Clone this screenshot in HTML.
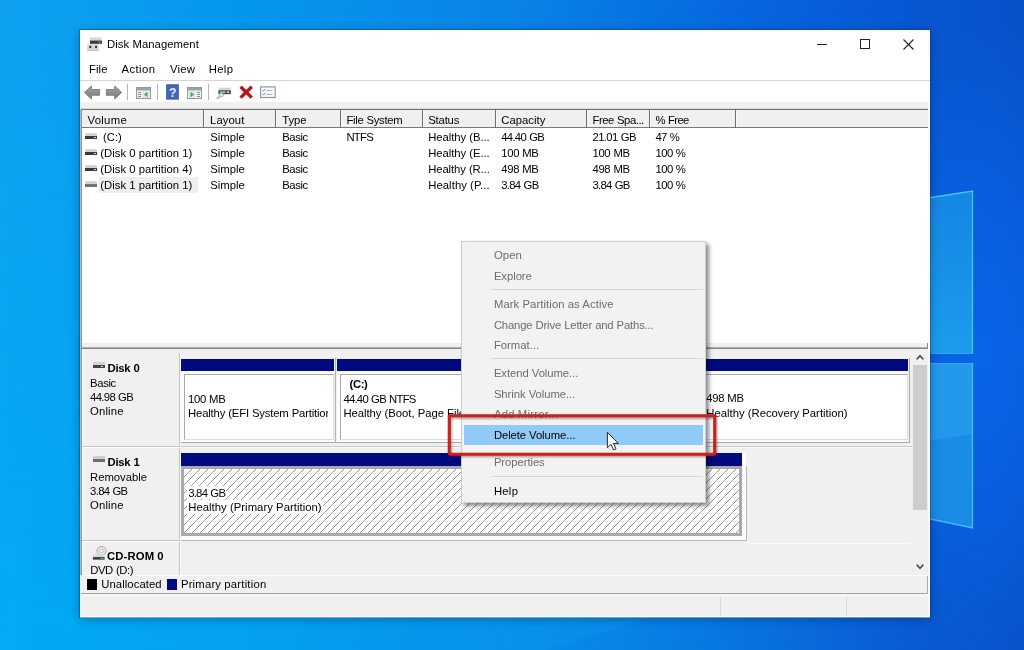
<!DOCTYPE html>
<html lang="en">
<head>
<meta charset="utf-8">
<title>Disk Management</title>
<style>
html,body{margin:0;padding:0;}
body{width:1024px;height:650px;overflow:hidden;position:relative;background:#0a6fd6;
  font-family:'Liberation Sans',sans-serif;font-size:12px;color:#000;}
.a{position:absolute;}
.t{position:absolute;white-space:pre;line-height:1;font-size:11.3px;}
.clip{position:absolute;overflow:hidden;}
</style>
</head>
<body>
<!-- desktop wallpaper -->
<div class="a" style="left:0;top:0;width:1024px;height:650px;
 background:linear-gradient(90deg,#10a2f0 0px,#0697ee 250px,#0a84e8 512px,#0873e3 640px,#0764de 768px,#0858d4 900px,#0a50ca 1024px);"></div>
<div class="a" style="left:0;top:0;width:1024px;height:650px;
 background:linear-gradient(90deg,#02abf3 0px,#04a1f0 256px,#0690ea 512px,#0782e6 640px,#0870de 768px,#095cd4 900px,#0a50c8 1024px);
 -webkit-mask-image:linear-gradient(180deg,rgba(0,0,0,0) 0px,rgba(0,0,0,1) 650px);mask-image:linear-gradient(180deg,rgba(0,0,0,0) 0px,rgba(0,0,0,1) 650px);"></div>
<svg class="a" style="left:0;top:0" width="1024" height="650" viewBox="0 0 1024 650">
  <defs>
    <linearGradient id="pane1" x1="0" y1="0" x2="0" y2="1">
      <stop offset="0" stop-color="#1486e4"/><stop offset="1" stop-color="#1c9cec"/>
    </linearGradient>
    <radialGradient id="glow" cx="0.5" cy="0.5" r="0.5">
      <stop offset="0" stop-color="#0768ea" stop-opacity=".9"/><stop offset=".55" stop-color="#0764e6" stop-opacity=".6"/><stop offset="1" stop-color="#0760e0" stop-opacity="0"/>
    </radialGradient>
    <linearGradient id="ray" x1="0" y1="0" x2="1" y2="0">
      <stop offset="0" stop-color="#0c9cf0" stop-opacity="0"/><stop offset="1" stop-color="#0c9cf0" stop-opacity=".4"/>
    </linearGradient>
  </defs>
  <polygon points="300,600 705,600 545,650 300,650" fill="url(#ray)"/>
  <ellipse cx="985" cy="350" rx="150" ry="330" fill="url(#glow)"/>
  <polygon points="928,198 972.5,191 972.5,354 928,354" fill="url(#pane1)"/>
  <polygon points="928,363 972.5,363 972.5,528 928,518.5" fill="#1a8ce6"/>
  <polygon points="928,363 972.5,363 972.5,434 928,441" fill="#2399ec"/>
  <polyline points="928,198 972.5,191 972.5,354" fill="none" stroke="#43c6f6" stroke-width="1.3"/>
  <polyline points="972.5,363 972.5,528 928,518.5" fill="none" stroke="#3fc0f5" stroke-width="1.3"/>
  <line x1="928" y1="363.5" x2="972.5" y2="363.5" stroke="#35a9f0" stroke-width="1"/>
  <line x1="928" y1="353.5" x2="972.5" y2="353.5" stroke="#2fa6ee" stroke-width="1"/>
</svg>
<!-- window frame -->
<div class="a" style="left:80px;top:30px;width:850px;height:587px;background:#fff;box-shadow:0 0 0 1px rgba(10,60,120,.4),0 2px 10px rgba(0,0,0,.3);"></div>
<!-- title icon -->
<svg class="a" style="left:86px;top:36px" width="18" height="16" viewBox="86 36 18 16">
  <rect x="90" y="37.4" width="11.6" height="3.1" fill="#d6dad6"/>
  <rect x="90" y="40.5" width="12" height="3.3" fill="#3b3b3b"/>
  <rect x="98.6" y="41.4" width="2.2" height="1.2" fill="#8d8d8d"/>
  <rect x="87.1" y="44" width="11.6" height="6.8" fill="#d8d8d8"/>
  <rect x="87.1" y="50" width="11.6" height="0.8" fill="#b4b4b4"/>
  <rect x="89.3" y="45.8" width="1.9" height="2.3" fill="#2e2e2e"/>
  <rect x="95.1" y="45.8" width="1.9" height="2.3" fill="#2e2e2e"/>
</svg>
<!-- caption buttons -->
<div class="a" style="left:817px;top:44px;width:10px;height:1px;background:#222;"></div>
<div class="a" style="left:860px;top:39px;width:8px;height:8px;border:1px solid #222;"></div>
<svg class="a" style="left:903px;top:38.5px" width="11" height="11" viewBox="0 0 11 11"><path d="M0.5 0.5 L10.5 10.5 M10.5 0.5 L0.5 10.5" stroke="#222" stroke-width="1.1" fill="none"/></svg>
<!-- menu/toolbar separators -->
<div class="a" style="left:80px;top:80px;width:850px;height:1px;background:#d4d4d4;"></div>
<div class="a" style="left:80px;top:102px;width:850px;height:515px;background:#f0f0f0;"></div>
<div class="a" style="left:80px;top:617px;width:850px;height:1px;background:rgba(244,250,255,.45);"></div>
<!-- toolbar icons -->
<svg class="a" style="left:80px;top:81px" width="220" height="21" viewBox="80 81 220 21">
  <defs><linearGradient id="arr" x1="0" y1="0" x2="0" y2="1"><stop offset="0" stop-color="#a9a9a9"/><stop offset=".5" stop-color="#8e8e8e"/><stop offset="1" stop-color="#7c7c7c"/></linearGradient></defs>
  <path d="M84.4 92.4 L91.4 86 V89.5 H99.6 V95.3 H91.4 V98.9 Z" fill="url(#arr)" stroke="#6f6f6f" stroke-width=".8" stroke-linejoin="round"/>
  <path d="M121.7 92.4 L114.7 86 V89.5 H106.4 V95.3 H114.7 V98.9 Z" fill="url(#arr)" stroke="#6f6f6f" stroke-width=".8" stroke-linejoin="round"/>
  <rect x="127" y="84" width="1" height="16" fill="#b4b4b4"/>
  <rect x="157" y="84" width="1" height="16" fill="#b4b4b4"/>
  <rect x="208" y="84" width="1" height="16" fill="#b4b4b4"/>
  <!-- show/hide console tree -->
  <rect x="136.5" y="87.5" width="14" height="11" fill="#f4f4f4" stroke="#8f9aa6"/>
  <rect x="137" y="88" width="13" height="2.5" fill="#9aa3ad"/>
  <rect x="138" y="92" width="3" height="1" fill="#8a8a8a"/><rect x="138" y="94" width="3" height="1" fill="#8a8a8a"/><rect x="138" y="96" width="3" height="1" fill="#8a8a8a"/>
  <rect x="142.5" y="91" width="7" height="7" fill="#dfe9df"/>
  <path d="M147.5 91.8 V97.2 L143.8 94.5 Z" fill="#52a352"/>
  <!-- help -->
  <rect x="166.2" y="84.3" width="12.6" height="15.3" fill="#30509f"/>
  <rect x="167.2" y="85.3" width="10.6" height="13.3" fill="#4366bb"/>
  <text x="172.6" y="96.6" font-family="'Liberation Sans',sans-serif" font-size="12" font-weight="700" fill="#eef2ff" text-anchor="middle">?</text>
  <!-- action pane -->
  <rect x="187.5" y="87.5" width="14" height="11" fill="#f4f4f4" stroke="#8f9aa6"/>
  <rect x="188" y="88" width="13" height="2.5" fill="#9aa3ad"/>
  <rect x="197" y="92" width="3" height="1" fill="#8a8a8a"/><rect x="197" y="94" width="3" height="1" fill="#8a8a8a"/><rect x="197" y="96" width="3" height="1" fill="#8a8a8a"/>
  <rect x="188.5" y="91" width="7" height="7" fill="#dfe9df"/>
  <path d="M190.5 91.8 V97.2 L194.2 94.5 Z" fill="#52a352"/>
  <!-- disk + magnifier -->
  <rect x="218.6" y="87.7" width="12" height="2.6" fill="#d3d7db"/>
  <rect x="218.4" y="90.2" width="12.4" height="4" fill="#444a50"/>
  <rect x="220" y="91.4" width="5.5" height="1.5" fill="#a8d4b4"/>
  <rect x="227" y="91.4" width="2" height="1.5" fill="#dfe8f0"/>
  <circle cx="221.2" cy="95" r="2" fill="#dcecf6" stroke="#93a7b8" stroke-width=".9"/>
  <path d="M219.8 96.5 L216.8 98.9" stroke="#93a7b8" stroke-width="1.5"/>
  <!-- red X -->
  <path d="M240.6 86.8 L251.8 97.6 M251.8 86.8 L240.6 97.6" stroke="#b8121a" stroke-width="3.3" fill="none"/>
  <!-- checklist -->
  <rect x="260.6" y="86.9" width="14.6" height="10.6" fill="#fbfbfb" stroke="#8e98a2" stroke-width="1.2"/>
  <path d="M262.6 90 l1 1.1 l1.8 -2.2 M262.6 94 l1 1.1 l1.8 -2.2" stroke="#5f8fcf" stroke-width="1" fill="none"/>
  <rect x="266.5" y="90" width="6" height="1" fill="#a9b2bb"/><rect x="266.5" y="94" width="6" height="1" fill="#a9b2bb"/>
</svg>
<!-- volume list -->
<div class="a" style="left:80px;top:109px;width:848px;height:234px;background:#fff;"></div>
<div class="a" style="left:82px;top:110px;width:846px;height:17px;background:#f0f0f0;"></div>
<div class="a" style="left:80px;top:109px;width:848px;height:1px;background:#6e6e6e;"></div>
<div class="a" style="left:80px;top:108px;width:848px;height:1px;background:#dcdcdc;"></div>
<div class="a" style="left:80px;top:109px;width:1px;height:466px;background:#b4bcc3;"></div>
<div class="a" style="left:81px;top:109px;width:1px;height:466px;background:#8c9399;"></div>
<div class="a" style="left:82px;top:127px;width:846px;height:1px;background:#787878;"></div>
<div class="a" style="left:203px;top:110px;width:1px;height:18px;background:#6e6e6e;"></div>
<div class="a" style="left:204px;top:110px;width:1px;height:17px;background:#fafafa;"></div>
<div class="a" style="left:275px;top:110px;width:1px;height:18px;background:#6e6e6e;"></div>
<div class="a" style="left:276px;top:110px;width:1px;height:17px;background:#fafafa;"></div>
<div class="a" style="left:340px;top:110px;width:1px;height:18px;background:#6e6e6e;"></div>
<div class="a" style="left:341px;top:110px;width:1px;height:17px;background:#fafafa;"></div>
<div class="a" style="left:422px;top:110px;width:1px;height:18px;background:#6e6e6e;"></div>
<div class="a" style="left:423px;top:110px;width:1px;height:17px;background:#fafafa;"></div>
<div class="a" style="left:495px;top:110px;width:1px;height:18px;background:#6e6e6e;"></div>
<div class="a" style="left:496px;top:110px;width:1px;height:17px;background:#fafafa;"></div>
<div class="a" style="left:586px;top:110px;width:1px;height:18px;background:#6e6e6e;"></div>
<div class="a" style="left:587px;top:110px;width:1px;height:17px;background:#fafafa;"></div>
<div class="a" style="left:649px;top:110px;width:1px;height:18px;background:#6e6e6e;"></div>
<div class="a" style="left:650px;top:110px;width:1px;height:17px;background:#fafafa;"></div>
<div class="a" style="left:735px;top:110px;width:1px;height:18px;background:#6e6e6e;"></div>
<div class="a" style="left:736px;top:110px;width:1px;height:17px;background:#fafafa;"></div>
<div class="a" style="left:99px;top:177px;width:99px;height:16px;background:#eeeeee;"></div>
<div class="a" style="left:85px;top:133px;width:12px;height:3px;background:#d2d5d2;border-radius:1px 1px 0 0;"></div>
<div class="a" style="left:85px;top:136px;width:12px;height:3px;background:#3a3a3a;"></div>
<div class="a" style="left:94px;top:137px;width:2px;height:1px;background:#cfe3cf;"></div>
<div class="a" style="left:85px;top:149px;width:12px;height:3px;background:#d2d5d2;border-radius:1px 1px 0 0;"></div>
<div class="a" style="left:85px;top:152px;width:12px;height:3px;background:#3a3a3a;"></div>
<div class="a" style="left:94px;top:153px;width:2px;height:1px;background:#cfe3cf;"></div>
<div class="a" style="left:85px;top:165px;width:12px;height:3px;background:#d2d5d2;border-radius:1px 1px 0 0;"></div>
<div class="a" style="left:85px;top:168px;width:12px;height:3px;background:#3a3a3a;"></div>
<div class="a" style="left:94px;top:169px;width:2px;height:1px;background:#cfe3cf;"></div>
<div class="a" style="left:85px;top:181px;width:12px;height:3px;background:#d2d5d2;border-radius:1px 1px 0 0;"></div>
<div class="a" style="left:85px;top:184px;width:12px;height:3px;background:#727272;"></div>
<!-- graphical view -->
<div class="a" style="left:82px;top:347px;width:846px;height:1px;background:#b0b0b0;"></div>
<div class="a" style="left:82px;top:348px;width:846px;height:1px;background:#868686;"></div>
<div class="a" style="left:82px;top:349px;width:1px;height:226px;background:#fafafa;"></div>
<!-- disk label panels -->
<div class="a" style="left:82px;top:353px;width:97px;height:93px;border-right:1px solid #c2c2c2;border-bottom:1px solid #c6c6c6;box-shadow:1px 1px 0 #fdfdfd;"></div>
<div class="a" style="left:82px;top:448px;width:97px;height:92px;border-right:1px solid #c2c2c2;border-bottom:1px solid #c6c6c6;box-shadow:1px 1px 0 #fdfdfd;"></div>
<div class="a" style="left:82px;top:542px;width:97px;height:33px;border-right:1px solid #c2c2c2;box-shadow:1px 0 0 #fdfdfd;"></div>
<!-- disk icons -->
<div class="a" style="left:93px;top:362px;width:12px;height:3px;background:#d2d5d2;"></div>
<div class="a" style="left:93px;top:365px;width:12px;height:3px;background:#474747;"></div>
<div class="a" style="left:101px;top:366px;width:2px;height:1px;background:#cfe3cf;"></div>
<div class="a" style="left:93px;top:456px;width:12px;height:3px;background:#cfcfcf;"></div>
<div class="a" style="left:93px;top:459px;width:12px;height:3px;background:#6e6e6e;"></div>
<!-- cd-rom icon -->
<svg class="a" style="left:91px;top:546px" width="16" height="16" viewBox="0 0 16 16">
  <circle cx="10.5" cy="5" r="4.6" fill="#e6e6e6" stroke="#a6a6a6" stroke-width=".9"/>
  <circle cx="10.5" cy="5" r="1.7" fill="#fdfdfd" stroke="#b0b0b0" stroke-width=".8"/>
  <rect x="1.9" y="8.5" width="11.7" height="2.5" fill="#d5d9d5"/>
  <rect x="1.9" y="11" width="11.7" height="2.7" fill="#3d4a41"/>
  <rect x="10" y="11.8" width="2.6" height="1" fill="#6fc77a"/>
</svg>
<!-- Disk 0 row frame lines -->
<div class="a" style="left:181px;top:442px;width:729px;height:1px;background:#acacac;"></div>
<div class="a" style="left:181px;top:446px;width:731px;height:1px;background:#c8c8c8;"></div>
<div class="a" style="left:181px;top:447px;width:731px;height:1px;background:#f8f8f8;"></div>
<!-- Disk 0: partition 1 -->
<div class="a" style="left:181px;top:359px;width:153px;height:12px;background:#000a80;"></div>
<div class="a" style="left:181px;top:371px;width:153px;height:71px;background:#fcfcfc;"></div>
<div class="a" style="left:184px;top:374px;width:148px;height:64px;background:#fff;border:1px solid #a9a9a9;border-right-color:#dedede;border-bottom-color:#dedede;"></div>
<div class="a" style="left:335px;top:358px;width:1px;height:84px;background:#b2b2b2;"></div>
<!-- Disk 0: partition 2 (C:) -->
<div class="a" style="left:337px;top:359px;width:360px;height:12px;background:#000a80;"></div>
<div class="a" style="left:337px;top:371px;width:360px;height:71px;background:#fcfcfc;"></div>
<div class="a" style="left:340px;top:374px;width:354px;height:64px;background:#fff;border:1px solid #a9a9a9;border-right-color:#dedede;border-bottom-color:#dedede;"></div>
<div class="a" style="left:698px;top:358px;width:1px;height:84px;background:#b2b2b2;"></div>
<!-- Disk 0: partition 3 (recovery) -->
<div class="a" style="left:700px;top:359px;width:208px;height:12px;background:#000a80;"></div>
<div class="a" style="left:700px;top:371px;width:208px;height:71px;background:#fcfcfc;"></div>
<div class="a" style="left:703px;top:374px;width:203px;height:64px;background:#fff;border:1px solid #a9a9a9;border-right-color:#dedede;border-bottom-color:#dedede;"></div>
<div class="a" style="left:909px;top:358px;width:1px;height:85px;background:#ababab;"></div>
<!-- Disk 1: removable, selected (hatched) -->
<div class="a" style="left:181px;top:466px;width:565px;height:74px;background:#fbfbfb;border-right:1px solid #b6b6b6;border-bottom:1px solid #b6b6b6;"></div>
<div class="a" style="left:181px;top:453px;width:561px;height:13px;background:#000a80;"></div>
<div class="a" style="left:181px;top:466px;width:555px;height:64px;border:3px solid #a9a9a9;
  background:#fff repeating-linear-gradient(135deg,rgba(0,0,0,0) 0px,rgba(0,0,0,0) 5.05px,#989898 5.05px,#989898 5.657px);"></div>
<div class="a" style="left:187px;top:486px;width:39px;height:13px;background:#fff;"></div>
<div class="a" style="left:187px;top:500px;width:136px;height:14px;background:#fff;"></div>
<div class="a" style="left:742px;top:453px;width:4px;height:13px;background:#fbfbfb;"></div>
<div class="a" style="left:747px;top:543px;width:163px;height:1px;background:#fafafa;"></div>
<!-- scrollbar -->
<div class="a" style="left:912px;top:349px;width:16px;height:226px;background:#f0f0f0;"></div>
<div class="a" style="left:913px;top:365px;width:14px;height:145px;background:#cdcdcd;"></div>
<svg class="a" style="left:912px;top:349px" width="16" height="226" viewBox="0 0 16 226">
  <path d="M4.7 10.4 L8 6.8 L11.3 10.4" fill="none" stroke="#505050" stroke-width="1.6"/>
  <path d="M4.7 215.6 L8 219.2 L11.3 215.6" fill="none" stroke="#505050" stroke-width="1.6"/>
</svg>
<!-- legend -->
<div class="a" style="left:82px;top:575px;width:846px;height:18px;background:#f0f0f0;"></div>
<div class="a" style="left:82px;top:575px;width:846px;height:1px;background:#fafafa;"></div>
<div class="a" style="left:87px;top:579px;width:10px;height:11px;background:#000;"></div>
<div class="a" style="left:167px;top:579px;width:10px;height:11px;background:#000a80;"></div>
<!-- status bar -->
<div class="a" style="left:81px;top:593px;width:847px;height:1px;background:#a8a8a8;"></div>
<div class="a" style="left:720px;top:597px;width:1px;height:19px;background:#dadada;"></div>
<div class="a" style="left:846px;top:597px;width:1px;height:19px;background:#dadada;"></div>
<div class="a" style="left:928px;top:102px;width:2px;height:515px;background:#fbfbfb;"></div>
<div class="a" style="left:927px;top:576px;width:1px;height:18px;background:#a8a8a8;"></div>
<div class="a" style="left:82px;top:595px;width:846px;height:1px;background:#fafafa;"></div>
<div class="a" style="left:80px;top:616px;width:850px;height:1px;background:#fafafa;"></div>
<div class="a" style="left:927px;top:343px;width:1px;height:5px;background:#8a8a8a;"></div>
<!-- context menu -->
<div class="a" style="left:461px;top:241px;width:243px;height:260px;background:#f2f2f2;border:1px solid #cfcfcf;box-shadow:3px 3px 4px rgba(0,0,0,.45);z-index:20;"></div>
<div class="a" style="left:491px;top:289px;width:212px;height:1px;background:#d7d7d7;z-index:21;"></div>
<div class="a" style="left:491px;top:358px;width:212px;height:1px;background:#d7d7d7;z-index:21;"></div>
<div class="a" style="left:491px;top:476px;width:212px;height:1px;background:#d7d7d7;z-index:21;"></div>
<div class="a" style="left:464px;top:425px;width:239px;height:20px;background:#91c9f7;z-index:21;"></div>
<!-- red annotation box -->
<svg class="a" style="left:440px;top:408px;z-index:40" width="290" height="60" viewBox="440 408 290 60">
  <defs><filter id="rs" x="-5%" y="-20%" width="110%" height="150%"><feGaussianBlur stdDeviation="1.3"/></filter></defs>
  <rect x="450.3" y="417.2" width="265.4" height="38.4" rx="0.6" fill="none" stroke="#5a1010" stroke-opacity=".45" stroke-width="3" filter="url(#rs)"/>
  <rect x="449.3" y="415.7" width="265.4" height="38.5" rx="0.6" fill="none" stroke="#c9211f" stroke-width="3.1"/>
</svg>
<!-- mouse cursor -->
<svg class="a" style="left:606px;top:431px;z-index:50" width="16" height="22" viewBox="0 0 16 22">
  <path d="M1.4 1.3 V16.8 L5 13.4 L7.6 18.9 L10 17.8 L7.5 12.4 H12.3 Z" fill="#fff" stroke="#18222c" stroke-width=".95" stroke-linejoin="round"/>
</svg>

<!-- text -->
<div class="a" style="left:0;top:0;width:1024px;height:650px;will-change:transform;">
<span class="t" style="left:107.1px;top:38.93px;letter-spacing:0.054px;word-spacing:-0.054px;">Disk Management</span>
<span class="t" style="left:89.0px;top:64.23px;letter-spacing:0.074px;">File</span>
<span class="t" style="left:121.5px;top:64.23px;letter-spacing:0.432px;">Action</span>
<span class="t" style="left:170.1px;top:64.23px;letter-spacing:0.176px;">View</span>
<span class="t" style="left:208.8px;top:64.23px;letter-spacing:0.316px;">Help</span>
<span class="t" style="left:87.5px;top:114.83px;letter-spacing:0.302px;">Volume</span>
<span class="t" style="left:210.1px;top:114.83px;letter-spacing:0.063px;">Layout</span>
<span class="t" style="left:282.2px;top:114.83px;letter-spacing:-0.025px;">Type</span>
<span class="t" style="left:346.4px;top:114.83px;letter-spacing:-0.302px;word-spacing:0.302px;">File System</span>
<span class="t" style="left:428.2px;top:114.83px;letter-spacing:-0.172px;">Status</span>
<span class="t" style="left:501.2px;top:114.83px;letter-spacing:0.031px;">Capacity</span>
<span class="t" style="left:592.5px;top:114.83px;letter-spacing:-0.459px;word-spacing:0.459px;">Free Spa...</span>
<span class="t" style="left:655.5px;top:114.83px;letter-spacing:-0.644px;word-spacing:0.644px;">% Free</span>
<span class="t" style="left:103.1px;top:131.83px;letter-spacing:-0.032px;">(C:)</span>
<span class="t" style="left:210.2px;top:131.83px;letter-spacing:0.028px;">Simple</span>
<span class="t" style="left:282.2px;top:131.83px;letter-spacing:-0.385px;">Basic</span>
<span class="t" style="left:346.4px;top:131.83px;letter-spacing:-0.725px;">NTFS</span>
<span class="t" style="left:428.2px;top:131.83px;letter-spacing:-0.055px;word-spacing:0.055px;">Healthy (B...</span>
<span class="t" style="left:501.2px;top:131.83px;letter-spacing:-0.676px;word-spacing:0.676px;">44.40 GB</span>
<span class="t" style="left:592.5px;top:131.83px;letter-spacing:-0.633px;word-spacing:0.633px;">21.01 GB</span>
<span class="t" style="left:655.5px;top:131.83px;letter-spacing:-0.683px;word-spacing:0.683px;">47 %</span>
<span class="t" style="left:100.3px;top:148.03px;letter-spacing:0.019px;word-spacing:-0.019px;">(Disk 0 partition 1)</span>
<span class="t" style="left:210.2px;top:148.03px;letter-spacing:0.028px;">Simple</span>
<span class="t" style="left:282.2px;top:148.03px;letter-spacing:-0.385px;">Basic</span>
<span class="t" style="left:428.2px;top:148.03px;letter-spacing:-0.055px;word-spacing:0.055px;">Healthy (E...</span>
<span class="t" style="left:501.2px;top:148.03px;letter-spacing:-0.308px;word-spacing:0.308px;">100 MB</span>
<span class="t" style="left:592.5px;top:148.03px;letter-spacing:-0.347px;word-spacing:0.347px;">100 MB</span>
<span class="t" style="left:655.5px;top:148.03px;letter-spacing:-0.562px;word-spacing:0.562px;">100 %</span>
<span class="t" style="left:100.3px;top:164.03px;letter-spacing:0.019px;word-spacing:-0.019px;">(Disk 0 partition 4)</span>
<span class="t" style="left:210.2px;top:164.03px;letter-spacing:0.028px;">Simple</span>
<span class="t" style="left:282.2px;top:164.03px;letter-spacing:-0.385px;">Basic</span>
<span class="t" style="left:428.2px;top:164.03px;letter-spacing:-0.107px;word-spacing:0.107px;">Healthy (R...</span>
<span class="t" style="left:501.2px;top:164.03px;letter-spacing:-0.308px;word-spacing:0.308px;">498 MB</span>
<span class="t" style="left:592.5px;top:164.03px;letter-spacing:-0.347px;word-spacing:0.347px;">498 MB</span>
<span class="t" style="left:655.5px;top:164.03px;letter-spacing:-0.562px;word-spacing:0.562px;">100 %</span>
<span class="t" style="left:100.3px;top:179.93px;letter-spacing:0.019px;word-spacing:-0.019px;">(Disk 1 partition 1)</span>
<span class="t" style="left:210.2px;top:179.93px;letter-spacing:0.028px;">Simple</span>
<span class="t" style="left:282.2px;top:179.93px;letter-spacing:-0.385px;">Basic</span>
<span class="t" style="left:428.2px;top:179.93px;letter-spacing:0.066px;word-spacing:-0.066px;">Healthy (P...</span>
<span class="t" style="left:501.2px;top:179.93px;letter-spacing:-0.692px;word-spacing:0.692px;">3.84 GB</span>
<span class="t" style="left:592.5px;top:179.93px;letter-spacing:-0.709px;word-spacing:0.709px;">3.84 GB</span>
<span class="t" style="left:655.5px;top:179.93px;letter-spacing:-0.562px;word-spacing:0.562px;">100 %</span>
<span class="t" style="left:107.5px;top:363.43px;letter-spacing:-0.259px;word-spacing:0.259px;font-weight:700;">Disk 0</span>
<span class="t" style="left:90.1px;top:377.73px;letter-spacing:-0.385px;">Basic</span>
<span class="t" style="left:90.1px;top:392.03px;letter-spacing:-0.676px;word-spacing:0.676px;">44.98 GB</span>
<span class="t" style="left:90.1px;top:406.23px;letter-spacing:0.141px;">Online</span>
<span class="t" style="left:107.5px;top:457.33px;letter-spacing:-0.259px;word-spacing:0.259px;font-weight:700;">Disk 1</span>
<span class="t" style="left:90.1px;top:471.83px;letter-spacing:-0.040px;">Removable</span>
<span class="t" style="left:90.1px;top:485.93px;letter-spacing:-0.692px;word-spacing:0.692px;">3.84 GB</span>
<span class="t" style="left:90.1px;top:500.23px;letter-spacing:0.141px;">Online</span>
<span class="t" style="left:106.9px;top:551.33px;letter-spacing:0.149px;word-spacing:-0.149px;font-weight:700;">CD-ROM 0</span>
<span class="t" style="left:101.2px;top:579.33px;letter-spacing:0.075px;">Unallocated</span>
<span class="t" style="left:180.9px;top:579.33px;letter-spacing:0.203px;word-spacing:-0.203px;">Primary partition</span>
<span class="t" style="left:188.1px;top:393.63px;letter-spacing:-0.328px;word-spacing:0.328px;">100 MB</span>
<div class="clip" style="left:188.1px;top:408.03px;width:140.0px;height:14.690000000000001px;"><span class="t" style="left:0;top:0;letter-spacing:-0.183px;word-spacing:0.183px;">Healthy (EFI System Partition)</span></div>
<span class="t" style="left:349.6px;top:379.13px;letter-spacing:-0.438px;font-weight:700;">(C:)</span>
<span class="t" style="left:343.4px;top:393.73px;letter-spacing:-0.743px;word-spacing:0.743px;">44.40 GB NTFS</span>
<span class="t" style="left:343.4px;top:408.13px;letter-spacing:-0.034px;word-spacing:0.034px;">Healthy (Boot, Page File, Crash Dump, Primary Partition)</span>
<span class="t" style="left:706.3px;top:393.13px;letter-spacing:-0.308px;word-spacing:0.308px;">498 MB</span>
<span class="t" style="left:706.3px;top:407.83px;letter-spacing:-0.003px;word-spacing:0.003px;">Healthy (Recovery Partition)</span>
<span class="t" style="left:188.2px;top:487.53px;letter-spacing:-0.742px;word-spacing:0.742px;">3.84 GB</span>
<span class="t" style="left:188.2px;top:502.33px;letter-spacing:0.041px;word-spacing:-0.041px;">Healthy (Primary Partition)</span>
<div class="clip" style="left:90.2px;top:565.23px;width:60.0px;height:12.2px;"><span class="t" style="left:0;top:0;letter-spacing:-0.416px;word-spacing:0.416px;">DVD (D:)</span></div>
</div>
<div class="a" style="left:0;top:0;width:1024px;height:650px;will-change:transform;z-index:30;">
<span class="t" style="left:493.9px;top:249.93px;letter-spacing:0.115px;color:#6d6d6d;">Open</span>
<span class="t" style="left:493.9px;top:270.93px;letter-spacing:-0.059px;color:#6d6d6d;">Explore</span>
<span class="t" style="left:493.9px;top:298.83px;letter-spacing:0.079px;word-spacing:-0.079px;color:#6d6d6d;">Mark Partition as Active</span>
<span class="t" style="left:493.9px;top:319.63px;letter-spacing:-0.176px;word-spacing:0.176px;color:#6d6d6d;">Change Drive Letter and Paths...</span>
<span class="t" style="left:493.9px;top:340.13px;letter-spacing:0.011px;color:#6d6d6d;">Format...</span>
<span class="t" style="left:493.9px;top:368.03px;letter-spacing:-0.067px;word-spacing:0.067px;color:#6d6d6d;">Extend Volume...</span>
<span class="t" style="left:493.9px;top:388.53px;letter-spacing:-0.058px;word-spacing:0.058px;color:#6d6d6d;">Shrink Volume...</span>
<span class="t" style="left:493.9px;top:409.03px;letter-spacing:0.247px;word-spacing:-0.247px;color:#6d6d6d;">Add Mirror...</span>
<span class="t" style="left:493.9px;top:430.13px;letter-spacing:-0.099px;word-spacing:0.099px;">Delete Volume...</span>
<span class="t" style="left:493.9px;top:457.43px;letter-spacing:-0.070px;color:#6d6d6d;">Properties</span>
<span class="t" style="left:493.9px;top:485.63px;letter-spacing:0.266px;">Help</span>
</div>
</body>
</html>
